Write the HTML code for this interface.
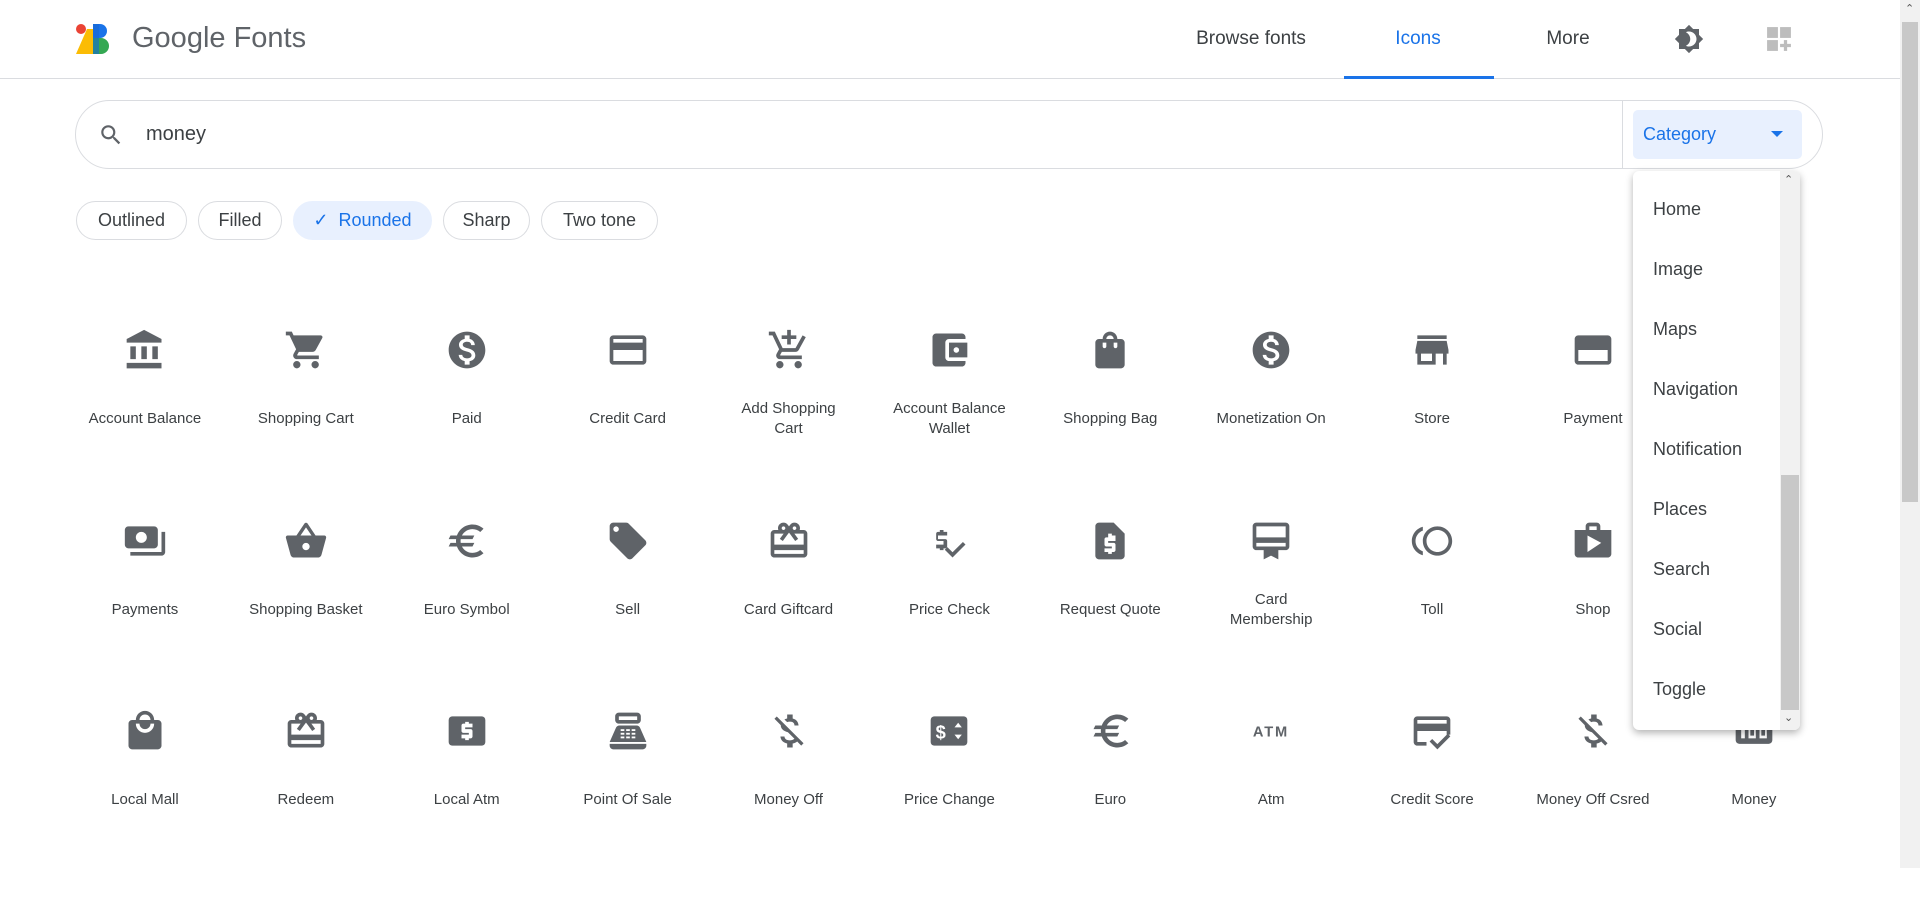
<!DOCTYPE html>
<html><head><meta charset="utf-8"><style>
*{box-sizing:border-box;margin:0;padding:0}
body{width:1920px;height:868px;overflow:hidden;background:#fff;font-family:"Liberation Sans",Arial,sans-serif;position:relative;color:#3c4043}
.abs{position:absolute}
.hdr{left:0;top:0;width:1900px;height:79px;border-bottom:1px solid #dadce0}
.nav{top:28px;font-size:19px;color:#3c4043;transform:translateX(-50%)}
.search{left:75px;top:100px;width:1748px;height:69px;border:1px solid #dadce0;border-radius:35px}
.chip{top:201px;height:39px;border:1px solid #dadce0;border-radius:20px;font-size:18px;color:#3c4043;display:flex;align-items:center;justify-content:center}
.grid{left:64.5px;top:328px;display:grid;grid-template-columns:repeat(11,160.9px);grid-auto-rows:190.5px}
.cell{display:flex;flex-direction:column;align-items:center}
.cell svg{width:44px;height:44px;fill:#5f6368}
.lbl{margin-top:27px;height:40px;display:flex;align-items:center;text-align:center;font-size:15px;line-height:20px;color:#3c4043;width:116px;justify-content:center}
.dd{left:1633px;top:171px;width:167px;height:559px;background:#fff;border-radius:6px;box-shadow:0 3px 8px rgba(0,0,0,.3);overflow:hidden}
.dd div.it{position:absolute;left:20px;font-size:18px;color:#3c4043}
</style></head><body>
<div class="abs hdr"></div>
<svg class="abs" style="left:76px;top:24px" width="40" height="30" viewBox="0 0 40 30">
<circle cx="5" cy="5" r="5" fill="#ea4335"/><polygon points="0,30 11,5 17,5 17,30" fill="#fbbc04"/>
<path d="M17 0h7a7 7 0 0 1 0 14h-7z" fill="#1a73e8"/><path d="M17 14h8a8 8 0 0 1 0 16h-8z" fill="#34a853"/><rect x="17" y="0" width="6" height="30" fill="#1967d2" opacity=".6"/></svg>
<div class="abs" style="left:132px;top:22px;font-size:29px;color:#5f6368">Google Fonts</div>
<div class="abs nav" style="left:1251px">Browse fonts</div>
<div class="abs nav" style="left:1418px;color:#1a73e8">Icons</div>
<div class="abs nav" style="left:1568px">More</div>
<div class="abs" style="left:1344px;top:76px;width:150px;height:3px;background:#1a73e8"></div>
<svg class="abs" style="left:1674px;top:24px" width="30" height="30" viewBox="0 0 24 24"><path fill="#5f6368" d="M20 8.69V4h-4.69L12 .69 8.69 4H4v4.69L.69 12 4 15.31V20h4.69L12 23.31 15.31 20H20v-4.69L23.31 12 20 8.69zM12 18c-.89 0-1.74-.2-2.5-.55C11.56 16.5 13 14.42 13 12s-1.44-4.5-3.5-5.45C10.26 6.2 11.11 6 12 6c3.31 0 6 2.69 6 6s-2.69 6-6 6z"/></svg>
<svg class="abs" style="left:1766px;top:26px" width="26" height="26" viewBox="0 0 24 24" fill="#bdbdbd"><rect x="1" y="1" width="10" height="10"/><rect x="13" y="1" width="10" height="10"/><rect x="1" y="13" width="10" height="10"/><rect x="16.5" y="13" width="3" height="10"/><rect x="13" y="16.5" width="10" height="3"/></svg>
<div class="abs" style="left:1900px;top:0;width:20px;height:868px;background:#f1f1f1"></div>
<div class="abs" style="left:1902px;top:22px;width:16px;height:480px;background:#c8c8c8"></div>
<div class="abs" style="left:1905px;top:2px;font-size:11px;color:#555">&#8963;</div>
<div class="abs search"></div>
<svg class="abs" style="left:98px;top:122px" width="26" height="26" viewBox="0 0 24 24"><path fill="#5f6368" d="M15.5 14h-.79l-.28-.27A6.47 6.47 0 0 0 16 9.5 6.5 6.5 0 1 0 9.5 16c1.61 0 3.09-.59 4.23-1.57l.27.28v.79l5 4.99L20.49 19l-4.99-5zm-6 0C7.01 14 5 11.99 5 9.5S7.01 5 9.5 5 14 7.01 14 9.5 11.99 14 9.5 14z"/></svg>
<div class="abs" style="left:146px;top:123px;font-size:20px;color:#3c4043">money</div>
<div class="abs" style="left:1622px;top:101px;width:1px;height:67px;background:#dadce0"></div>
<div class="abs" style="left:1633px;top:110px;width:169px;height:49px;background:#e8f0fe;border-radius:5px"></div>
<div class="abs" style="left:1643px;top:124px;font-size:18px;color:#1a73e8">Category</div>
<div class="abs" style="left:1771px;top:131px;width:0;height:0;border-left:6px solid transparent;border-right:6px solid transparent;border-top:6px solid #1a73e8"></div>
<div class="abs chip" style="left:76px;width:111px">Outlined</div>
<div class="abs chip" style="left:198px;width:84px">Filled</div>
<div class="abs chip" style="left:293px;width:139px;background:#e8f0fe;border-color:#e8f0fe;color:#1a73e8"><span style="margin-right:10px;font-size:18px">&#10003;</span>Rounded</div>
<div class="abs chip" style="left:443px;width:87px">Sharp</div>
<div class="abs chip" style="left:541px;width:117px">Two tone</div>

<div class="abs grid">
<div class="cell"><svg viewBox="0 0 24 24"><path d="M4 10v7h3v-7H4zm6 0v7h3v-7h-3zM2 22h19v-3H2v3zm14-12v7h3v-7h-3zm-4.5-9L2 6v2h19V6l-9.5-5z"/></svg><div class="lbl">Account Balance</div></div>
<div class="cell"><svg viewBox="0 0 24 24"><path d="M7 18c-1.1 0-1.99.9-1.99 2S5.9 22 7 22s2-.9 2-2-.9-2-2-2zM1 2v2h2l3.6 7.59-1.35 2.45c-.16.28-.25.61-.25.96 0 1.1.9 2 2 2h12v-2H7.42c-.14 0-.25-.11-.25-.25l.03-.12.9-1.63h7.45c.75 0 1.41-.41 1.75-1.03l3.58-6.49A1 1 0 0 0 20 4H5.21l-.94-2H1zm16 16c-1.1 0-1.99.9-1.99 2s.89 2 1.99 2 2-.9 2-2-.9-2-2-2z"/></svg><div class="lbl">Shopping Cart</div></div>
<div class="cell"><svg viewBox="0 0 24 24"><path d="M12 2C6.48 2 2 6.48 2 12s4.48 10 10 10 10-4.48 10-10S17.52 2 12 2zm1.41 16.09V20h-2.67v-1.93c-1.71-.36-3.160-1.46-3.27-3.4h1.96c.1 1.05.82 1.87 2.65 1.87 1.96 0 2.4-.98 2.4-1.59 0-.83-.44-1.61-2.67-2.14-2.48-.6-4.18-1.62-4.18-3.67 0-1.72 1.39-2.84 3.11-3.21V4h2.67v1.95c1.86.45 2.79 1.86 2.85 3.39H14.3c-.05-1.11-.64-1.87-2.22-1.87-1.5 0-2.4.68-2.4 1.64 0 .84.65 1.39 2.67 1.91s4.18 1.39 4.18 3.91c-.01 1.83-1.38 2.83-3.12 3.16z"/></svg><div class="lbl">Paid</div></div>
<div class="cell"><svg viewBox="0 0 24 24"><path d="M20 4H4c-1.11 0-1.99.89-1.99 2L2 18c0 1.11.89 2 2 2h16c1.11 0 2-.89 2-2V6c0-1.11-.89-2-2-2zm0 14H4v-6h16v6zm0-10H4V6h16v2z"/></svg><div class="lbl">Credit Card</div></div>
<div class="cell"><svg viewBox="0 0 24 24"><path d="M11 9h2V6h3V4h-3V1h-2v3H8v2h3v3zm-4 9c-1.1 0-1.99.9-1.99 2S5.9 22 7 22s2-.9 2-2-.9-2-2-2zm10 0c-1.1 0-1.99.9-1.99 2s.89 2 1.99 2 2-.9 2-2-.9-2-2-2zm-9.83-3.25l.03-.12.9-1.63h7.45c.75 0 1.41-.41 1.75-1.03l3.86-7.01L19.42 4h-.01l-1.1 2-2.76 5H8.53l-.13-.27L6.16 6l-.95-2-.94-2H1v2h2l3.6 7.59-1.35 2.45c-.16.28-.25.61-.25.96 0 1.1.9 2 2 2h12v-2H7.42c-.13 0-.25-.11-.25-.25z"/></svg><div class="lbl">Add Shopping Cart</div></div>
<div class="cell"><svg viewBox="0 0 24 24"><path d="M21 18v1c0 1.1-.9 2-2 2H5c-1.11 0-2-.9-2-2V5c0-1.1.89-2 2-2h14c1.1 0 2 .9 2 2v1h-9c-1.11 0-2 .9-2 2v8c0 1.1.89 2 2 2h9zm-9-2h10V8H12v8zm4-2.5c-.83 0-1.5-.67-1.5-1.5s.67-1.5 1.5-1.5 1.5.67 1.5 1.5-.67 1.5-1.5 1.5z"/></svg><div class="lbl">Account Balance Wallet</div></div>
<div class="cell"><svg viewBox="0 0 24 24"><path d="M18 6h-2c0-2.21-1.79-4-4-4S8 3.79 8 6H6c-1.1 0-2 .9-2 2v12c0 1.1.9 2 2 2h12c1.1 0 2-.9 2-2V8c0-1.1-.9-2-2-2zm-8 4c0 .55-.45 1-1 1s-1-.45-1-1V8h2v2zm2-6c1.1 0 2 .9 2 2h-4c0-1.1.9-2 2-2zm4 6c0 .55-.45 1-1 1s-1-.45-1-1V8h2v2z"/></svg><div class="lbl">Shopping Bag</div></div>
<div class="cell"><svg viewBox="0 0 24 24"><path d="M12 2C6.48 2 2 6.48 2 12s4.48 10 10 10 10-4.48 10-10S17.52 2 12 2zm1.41 16.09V20h-2.67v-1.93c-1.71-.36-3.16-1.46-3.27-3.4h1.96c.1 1.05.82 1.87 2.65 1.87 1.96 0 2.4-.98 2.4-1.59 0-.83-.44-1.61-2.67-2.14-2.48-.6-4.18-1.62-4.18-3.67 0-1.72 1.39-2.84 3.11-3.21V4h2.67v1.95c1.86.45 2.79 1.86 2.85 3.39H14.3c-.05-1.11-.64-1.87-2.22-1.87-1.5 0-2.4.68-2.4 1.64 0 .84.65 1.39 2.67 1.91s4.18 1.39 4.18 3.91c-.01 1.83-1.38 2.83-3.12 3.16z"/></svg><div class="lbl">Monetization On</div></div>
<div class="cell"><svg viewBox="0 0 24 24"><path d="M20 4H4v2h16V4zm1 10v-2l-1-5H4l-1 5v2h1v6h10v-6h4v6h2v-6h1zm-9 4H6v-4h6v4z"/></svg><div class="lbl">Store</div></div>
<div class="cell"><svg viewBox="0 0 24 24"><path d="M20 4H4c-1.11 0-1.99.89-1.99 2L2 18c0 1.11.89 2 2 2h16c1.11 0 2-.89 2-2V6c0-1.11-.89-2-2-2zm0 14H4v-6h16v6zm0-10H4V6h16v2z"/><rect x="3" y="5" width="18" height="4"/></svg><div class="lbl">Payment</div></div>
<div class="cell"><svg viewBox="0 0 24 24"><path d="M11.8 10.9c-2.27-.59-3-1.2-3-2.15 0-1.09 1.01-1.85 2.7-1.85 1.78 0 2.44.85 2.5 2.1h2.21c-.07-1.72-1.12-3.3-3.21-3.81V3h-3v2.16c-1.94.42-3.5 1.68-3.5 3.61 0 2.31 1.91 3.46 4.7 4.13 2.5.6 3 1.48 3 2.41 0 .69-.49 1.79-2.7 1.79-2.06 0-2.87-.92-2.98-2.1h-2.2c.12 2.19 1.76 3.42 3.68 3.83V21h3v-2.15c1.95-.37 3.5-1.5 3.5-3.55 0-2.84-2.43-3.81-4.7-4.4z"/></svg><div class="lbl">Attach Money</div></div>

<div class="cell"><svg viewBox="0 0 24 24"><path d="M19 14V6c0-1.1-.9-2-2-2H3c-1.1 0-2 .9-2 2v8c0 1.1.9 2 2 2h14c1.1 0 2-.9 2-2zm-9-1c-1.66 0-3-1.34-3-3s1.34-3 3-3 3 1.34 3 3-1.34 3-3 3zm13-6v11c0 1.1-.9 2-2 2H4v-2h17V7h2z"/></svg><div class="lbl">Payments</div></div>
<div class="cell"><svg viewBox="0 0 24 24"><path d="M17.21 9l-4.38-6.56c-.19-.28-.51-.42-.83-.42-.32 0-.64.14-.83.43L6.79 9H2c-.55 0-1 .45-1 1 0 .09.01.18.04.27l2.54 9.27c.23.84 1 1.46 1.92 1.46h13c.92 0 1.69-.62 1.930-1.46l2.54-9.27L23 10c0-.55-.45-1-1-1h-4.79zM9 9l3-4.4L15 9H9zm3 8c-1.1 0-2-.9-2-2s.9-2 2-2 2 .9 2 2-.9 2-2 2z"/></svg><div class="lbl">Shopping Basket</div></div>
<div class="cell"><svg viewBox="0 0 24 24"><path d="M15 18.5c-2.51 0-4.68-1.42-5.76-3.5H15l1-2H8.58c-.05-.33-.08-.66-.08-1s.03-.67.08-1H15l1-2H9.24C10.32 6.92 12.5 5.5 15 5.5c1.61 0 3.09.59 4.23 1.57L21 5.3C19.41 3.87 17.3 3 15 3c-3.92 0-7.24 2.51-8.48 6H3l-1 2h4.06c-.04.33-.06.66-.06 1s.02.67.06 1H3l-1 2h4.52c1.24 3.49 4.56 6 8.48 6 2.31 0 4.41-.87 6-2.3l-1.78-1.77c-1.13.98-2.6 1.57-4.22 1.57z"/></svg><div class="lbl">Euro Symbol</div></div>
<div class="cell"><svg viewBox="0 0 24 24"><path d="M21.41 11.58l-9-9C12.05 2.22 11.55 2 11 2H4c-1.1 0-2 .9-2 2v7c0 .55.22 1.05.59 1.42l9 9c.36.36.86.58 1.41.58.55 0 1.05-.22 1.41-.59l7-7c.37-.36.59-.86.59-1.41 0-.55-.23-1.06-.59-1.42zM5.5 7C4.67 7 4 6.33 4 5.5S4.67 4 5.5 4 7 4.67 7 5.5 6.33 7 5.5 7z"/></svg><div class="lbl">Sell</div></div>
<div class="cell"><svg viewBox="0 0 24 24"><path d="M20 6h-2.18c.11-.31.18-.65.18-1 0-1.66-1.34-3-3-3-1.05 0-1.96.54-2.5 1.35l-.5.67-.5-.68C10.96 2.54 10.05 2 9 2 7.34 2 6 3.34 6 5c0 .35.07.69.18 1H4c-1.11 0-1.99.89-1.99 2L2 19c0 1.11.89 2 2 2h16c1.11 0 2-.89 2-2V8c0-1.11-.89-2-2-2zm-5-2c.55 0 1 .45 1 1s-.45 1-1 1-1-.45-1-1 .45-1 1-1zM9 4c.55 0 1 .45 1 1s-.45 1-1 1-1-.45-1-1 .45-1 1-1zm11 15H4v-2h16v2zm0-5H4V8h5.08L7 10.83 8.62 12 11 8.76l1-1.36 1 1.36L15.38 12 17 10.83 14.92 8H20v6z"/></svg><div class="lbl">Card Giftcard</div></div>
<div class="cell"><svg viewBox="0 0 24 24"><path d="M11 13v-1c0-.55-.45-1-1-1H6V9h5V7H9V6H7v1H6c-.55 0-1 .45-1 1v3c0 .55.45 1 1 1h3v2H5v2h2v1h2v-1h1c.55 0 1-.45 1-1v-2zm8.59-.48l-5.66 5.65-2.83-2.83-1.41 1.42L13.93 21 21 13.93z"/></svg><div class="lbl">Price Check</div></div>
<div class="cell"><svg viewBox="0 0 24 24"><path d="M14 2H6c-1.1 0-1.99.9-1.99 2L4 20c0 1.1.89 2 1.99 2H18c1.1 0 2-.9 2-2V8l-6-6zm1 10h-4v1h3c.55 0 1 .45 1 1v3c0 .55-.45 1-1 1h-1v1h-2v-1H9v-2h4v-1h-3c-.55 0-1-.45-1-1v-3c0-.55.45-1 1-1h1V8h2v1h2v2z"/></svg><div class="lbl">Request Quote</div></div>
<div class="cell"><svg viewBox="0 0 24 24"><path d="M20 2H4c-1.11 0-2 .89-2 2v11c0 1.11.89 2 2 2h4v5l4-2 4 2v-5h4c1.11 0 2-.89 2-2V4c0-1.11-.89-2-2-2zm0 13H4v-2h16v2zm0-5H4V4h16v6z"/></svg><div class="lbl">Card Membership</div></div>
<div class="cell"><svg viewBox="0 0 24 24"><path d="M15 4c-4.42 0-8 3.58-8 8s3.58 8 8 8 8-3.58 8-8-3.58-8-8-8zm0 14c-3.31 0-6-2.69-6-6s2.69-6 6-6 6 2.69 6 6-2.69 6-6 6zM3 12c0-2.61 1.67-4.83 4-5.65V4.26C3.55 5.15 1 8.27 1 12s2.55 6.85 6 7.74v-2.09c-2.33-.82-4-3.04-4-5.65z"/></svg><div class="lbl">Toll</div></div>
<div class="cell"><svg viewBox="0 0 24 24"><path d="M16 6V4c0-1.11-.89-2-2-2h-4c-1.11 0-2 .89-2 2v2H2v13c0 1.11.89 2 2 2h16c1.11 0 2-.89 2-2V6h-6zm-6-2h4v2h-4V4zM9 18V9l7.5 4L9 18z"/></svg><div class="lbl">Shop</div></div>
<div class="cell"><svg viewBox="0 0 24 24"><rect x="3" y="5" width="18" height="14" rx="2"/></svg><div class="lbl">Savings</div></div>

<div class="cell"><svg viewBox="0 0 24 24"><path d="M19 6h-2c0-2.76-2.24-5-5-5S7 3.24 7 6H5c-1.1 0-1.99.9-1.99 2L3 20c0 1.1.9 2 2 2h14c1.1 0 2-.9 2-2V8c0-1.1-.9-2-2-2zm-7-3c1.66 0 3 1.34 3 3H9c0-1.66 1.34-3 3-3zm0 10c-2.76 0-5-2.24-5-5h2c0 1.66 1.34 3 3 3s3-1.34 3-3h2c0 2.76-2.24 5-5 5z"/></svg><div class="lbl">Local Mall</div></div>
<div class="cell"><svg viewBox="0 0 24 24"><path d="M20 6h-2.18c.11-.31.18-.65.18-1 0-1.66-1.34-3-3-3-1.05 0-1.96.54-2.5 1.35l-.5.67-.5-.68C10.96 2.54 10.05 2 9 2 7.34 2 6 3.34 6 5c0 .35.07.69.18 1H4c-1.11 0-1.99.89-1.99 2L2 19c0 1.11.89 2 2 2h16c1.11 0 2-.89 2-2V8c0-1.11-.89-2-2-2zm-5-2c.55 0 1 .45 1 1s-.45 1-1 1-1-.45-1-1 .45-1 1-1zM9 4c.55 0 1 .45 1 1s-.45 1-1 1-1-.45-1-1 .45-1 1-1zm11 15H4v-2h16v2zm0-5H4V8h5.08L7 10.83 8.62 12 11 8.76l1-1.36 1 1.36L15.38 12 17 10.83 14.92 8H20v6z"/></svg><div class="lbl">Redeem</div></div>
<div class="cell"><svg viewBox="0 0 24 24"><rect x="2" y="4" width="20" height="16" rx="2"/><path fill="#fff" d="M11 17h2v-1h1c.55 0 1-.45 1-1v-3c0-.55-.45-1-1-1h-3v-1h4V8h-2V7h-2v1h-1c-.55 0-1 .45-1 1v3c0 .55.45 1 1 1h3v1H9v2h2v1z"/></svg><div class="lbl">Local Atm</div></div>
<div class="cell"><svg viewBox="0 0 24 24"><path d="M17 2H7c-1.1 0-2 .9-2 2v2c0 1.1.9 2 2 2h10c1.1 0 2-.9 2-2V4c0-1.1-.9-2-2-2zm0 4H7V4h10v2zm3 16H4c-1.1 0-2-.9-2-2v-1h20v1c0 1.1-.9 2-2 2zm-1.47-11.81C18.21 9.47 17.49 9 16.7 9H7.3c-.79 0-1.51.47-1.83 1.19L2 18h20l-3.47-7.81z"/><g fill="#fff"><rect x="8" y="11" width="2" height="1"/><rect x="11" y="11" width="2" height="1"/><rect x="14" y="11" width="2" height="1"/><rect x="8" y="13" width="2" height="1"/><rect x="11" y="13" width="2" height="1"/><rect x="14" y="13" width="2" height="1"/><rect x="8" y="15" width="2" height="1"/><rect x="11" y="15" width="2" height="1"/><rect x="14" y="15" width="2" height="1"/></g></svg><div class="lbl">Point Of Sale</div></div>
<div class="cell"><svg viewBox="0 0 24 24"><path d="M12.5 6.9c1.78 0 2.44.85 2.5 2.1h2.21c-.07-1.72-1.12-3.3-3.21-3.81V3h-3v2.16c-.53.12-1.03.3-1.48.54l1.47 1.47c.41-.17.91-.27 1.51-.27zM5.33 4.06L4.06 5.33 7.5 8.77c0 2.08 1.56 3.21 3.91 3.91l3.51 3.51c-.34.48-1.05.91-2.42.91-2.06 0-2.87-.92-2.98-2.1h-2.2c.12 2.19 1.76 3.42 3.68 3.83V21h3v-2.15c.96-.18 1.82-.55 2.45-1.12l2.22 2.22 1.27-1.27L5.33 4.06z"/></svg><div class="lbl">Money Off</div></div>
<div class="cell"><svg viewBox="0 0 24 24"><rect x="2" y="4" width="20" height="16" rx="2"/><text x="7.5" y="16" font-size="10" font-weight="bold" fill="#fff" font-family="Liberation Sans" text-anchor="middle">$</text><path fill="#fff" d="M15 10l2-2.5 2 2.5zM15 14l2 2.5 2-2.5z"/></svg><div class="lbl">Price Change</div></div>
<div class="cell"><svg viewBox="0 0 24 24"><path d="M15 18.5c-2.51 0-4.68-1.42-5.76-3.5H15l1-2H8.58c-.05-.33-.08-.66-.08-1s.03-.67.08-1H15l1-2H9.24C10.32 6.92 12.5 5.5 15 5.5c1.61 0 3.09.59 4.23 1.57L21 5.3C19.41 3.87 17.3 3 15 3c-3.92 0-7.24 2.51-8.48 6H3l-1 2h4.06c-.04.33-.06.66-.06 1s.02.67.06 1H3l-1 2h4.52c1.24 3.49 4.56 6 8.48 6 2.31 0 4.41-.87 6-2.3l-1.78-1.77c-1.13.98-2.6 1.57-4.22 1.57z" transform="translate(1 0)"/></svg><div class="lbl">Euro</div></div>
<div class="cell"><svg viewBox="0 0 24 24"><text x="12" y="15" font-size="8" font-weight="bold" fill="#5f6368" font-family="Liberation Sans" text-anchor="middle" letter-spacing="1">ATM</text></svg><div class="lbl">Atm</div></div>
<div class="cell"><svg viewBox="0 0 24 24"><path d="M20 4H4c-1.11 0-1.99.89-1.99 2L2 18c0 1.11.89 2 2 2h5v-2H4v-6h16v2h2V6c0-1.11-.9-2-2-2zm0 4H4V6h16v2zm-5.07 11.17l-2.83-2.83-1.41 1.41L14.93 22 22 14.93l-1.41-1.41-5.66 5.65z"/></svg><div class="lbl">Credit Score</div></div>
<div class="cell"><svg viewBox="0 0 24 24"><path d="M12.5 6.9c1.78 0 2.44.85 2.5 2.1h2.21c-.07-1.72-1.12-3.3-3.21-3.81V3h-3v2.16c-.53.12-1.03.3-1.48.54l1.47 1.47c.41-.17.91-.27 1.51-.27zM5.33 4.06L4.06 5.33 7.5 8.77c0 2.08 1.56 3.21 3.91 3.91l3.51 3.51c-.34.48-1.05.91-2.42.91-2.06 0-2.87-.92-2.98-2.1h-2.2c.12 2.19 1.76 3.42 3.68 3.83V21h3v-2.15c.96-.18 1.82-.55 2.45-1.12l2.22 2.22 1.27-1.27L5.33 4.06z"/></svg><div class="lbl">Money Off Csred</div></div>
<div class="cell"><svg viewBox="0 0 24 24"><rect x="2" y="5" width="20" height="14" rx="2"/><g fill="#fff"><rect x="5" y="8" width="2" height="8"/><rect x="9" y="8" width="4" height="8"/><rect x="15" y="8" width="4" height="8"/></g><g fill="#5f6368"><rect x="10" y="9.5" width="2" height="5"/><rect x="16" y="9.5" width="2" height="5"/></g></svg><div class="lbl">Money</div></div>
</div>

<div class="abs dd">
<div class="it" style="top:28px">Home</div>
<div class="it" style="top:88px">Image</div>
<div class="it" style="top:148px">Maps</div>
<div class="it" style="top:208px">Navigation</div>
<div class="it" style="top:268px">Notification</div>
<div class="it" style="top:328px">Places</div>
<div class="it" style="top:388px">Search</div>
<div class="it" style="top:448px">Social</div>
<div class="it" style="top:508px">Toggle</div>
<div style="position:absolute;left:147px;top:0;width:20px;height:559px;background:#f1f1f1"></div>
<div style="position:absolute;left:148px;top:304px;width:18px;height:235px;background:#c8c8c8"></div>
<div style="position:absolute;left:151px;top:2px;font-size:11px;color:#555">&#8963;</div>
<div style="position:absolute;left:151px;top:540px;font-size:11px;color:#555">&#8964;</div>
</div>
</body></html>
